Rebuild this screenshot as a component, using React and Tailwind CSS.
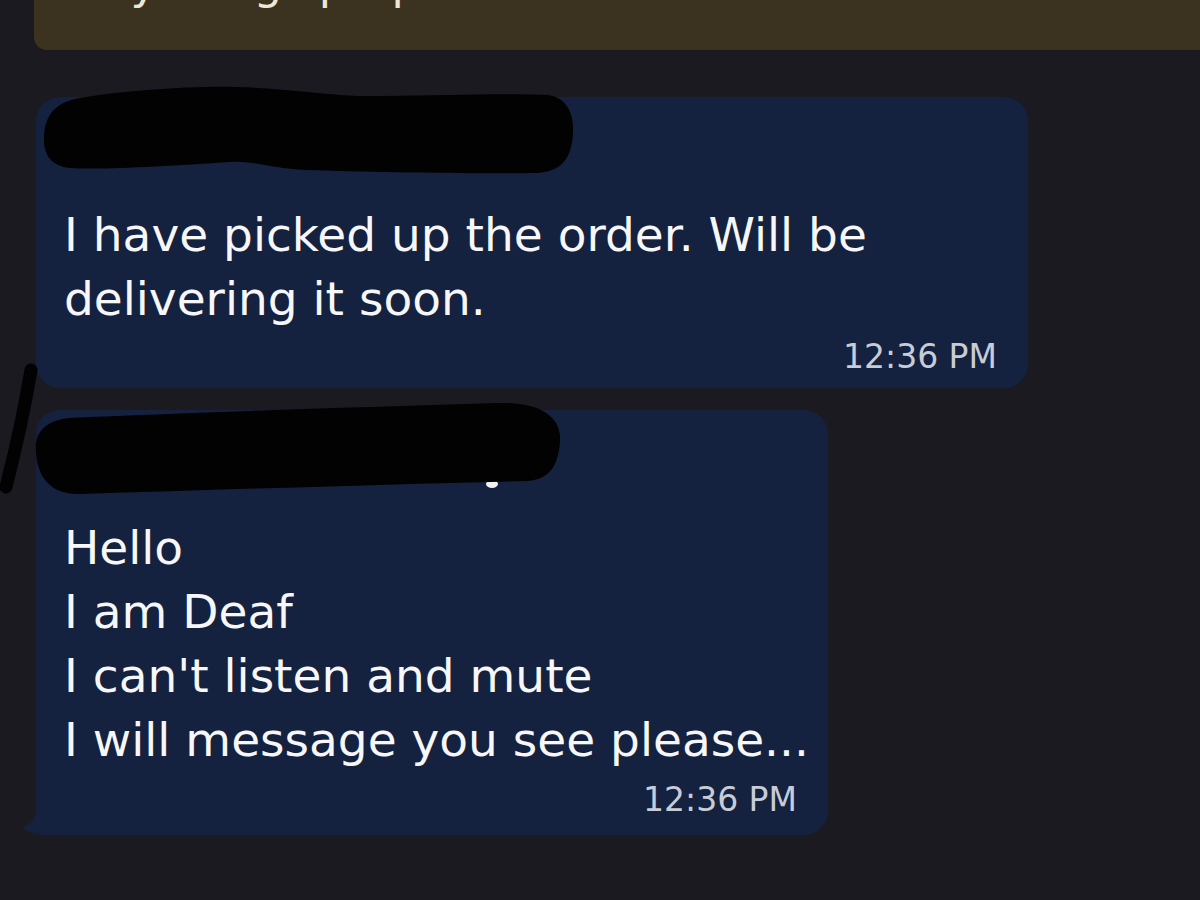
export default function App() {
  const font = { fontFamily: '"DejaVu Sans", "Noto Sans", "Liberation Sans", sans-serif' };
  return (
    <div
      className="relative h-[900px] w-[1200px] overflow-hidden bg-[#1b1a20] pl-[34px]"
      style={font}
    >
      {/* pinned notice bar, scrolled mostly out of view */}
      <div className="h-[50px] overflow-hidden rounded-bl-[13px] bg-[#3b331f]">
        <p className="-mt-[48px] whitespace-nowrap pl-[20px] text-[45px] leading-[64px] text-[#ece7d6] [word-spacing:-6px]">
          Only bring up a photo ID at the door
        </p>
      </div>

      {/* first incoming message */}
      <div className="ml-[2px] mt-[47px] w-[992px] rounded-[24px] bg-[#14223f] pb-[11px] pl-[28px] pr-[31px]">
        <div className="h-[106px]" />
        <p className="whitespace-nowrap text-[47px] leading-[64px] text-[#f7f7f9]">
          I have picked up the order. Will be
          <br />
          delivering it soon.
        </p>
        <p className="mt-[6px] text-right text-[33px] leading-[40px] text-[#c8ccd7]">12:36 PM</p>
      </div>

      {/* second incoming message with tail */}
      <div className="relative ml-[2px] mt-[22px] w-[792px] rounded-[24px] rounded-bl-[6px] bg-[#14223f] pb-[15px] pl-[28px] pr-[31px]">
        <svg
          className="absolute bottom-0 left-[-14px]"
          width="20"
          height="24"
          viewBox="0 0 20 24"
        >
          <path d="M14 0 C13 8 8 14 0 17 C6 21 12 23 20 24 L14 24 Z" fill="#14223f" />
        </svg>
        <div className="h-[106px]" />
        <p className="whitespace-nowrap text-[47px] leading-[64px] text-[#f7f7f9]">
          Hello
          <br />
          I am Deaf
          <br />
          I can't listen and mute
          <br />
          I will message you see please...
        </p>
        <p className="mt-[8px] text-right text-[33px] leading-[40px] text-[#c8ccd7]">12:36 PM</p>
      </div>

      {/* marker strokes hiding sender names */}
      <svg
        className="pointer-events-none absolute left-0 top-0"
        width="1200"
        height="900"
        viewBox="0 0 1200 900"
      >
        <ellipse cx="492" cy="484" rx="6" ry="4" fill="#f2f2f2" />
        <path
          d="M44 140 C44 112 58 102 80 98 C130 90 190 86 235 87 C290 88 330 97 383 96 C450 95 510 93 548 95 C568 98 574 115 573 132 C572 160 560 172 536 173 C470 174 370 172 306 170 C270 168 250 160 230 162 C170 166 100 170 70 168 C52 166 44 156 44 140 Z"
          fill="#020203"
        />
        <path
          d="M36 452 C34 432 46 420 70 418 C180 413 330 408 498 403 C545 402 562 420 560 442 C558 468 548 479 528 481 C400 484 240 489 80 494 C52 495 37 478 36 452 Z"
          fill="#020203"
        />
        <path d="M31 370 C26 400 18 440 6 487" stroke="#020203" strokeWidth="13" strokeLinecap="round" fill="none" />
      </svg>
    </div>
  );
}
